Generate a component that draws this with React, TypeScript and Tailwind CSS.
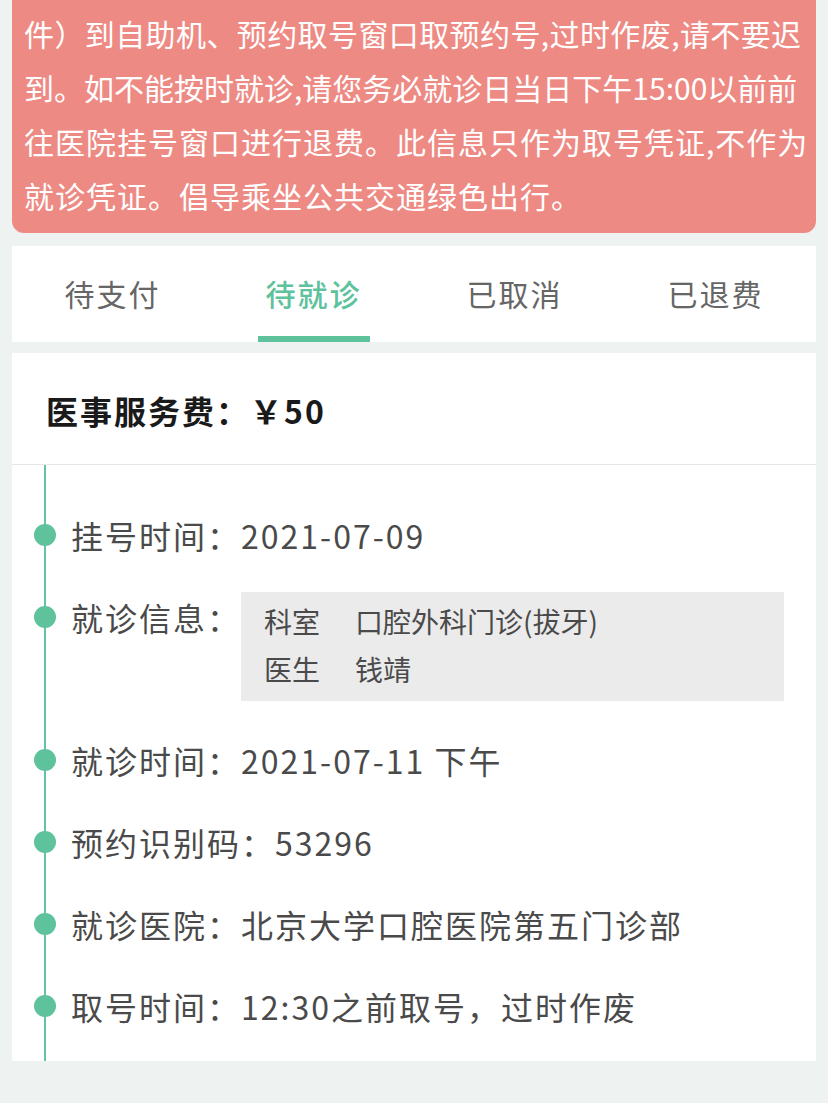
const tabs = ["待支付", "待就诊", "已取消", "已退费"];

const noticeLines = [
  { text: "件）到自助机、预约取号窗口取预约号,过时作废,请不要迟", tracking: "tracking-[0.4px]" },
  { text: "到。如不能按时就诊,请您务必就诊日当日下午15:00以前前", tracking: "tracking-[0px]" },
  { text: "往医院挂号窗口进行退费。此信息只作为取号凭证,不作为", tracking: "tracking-[1px]" },
  { text: "就诊凭证。倡导乘坐公共交通绿色出行。", tracking: "tracking-[1px]" },
];

const font = { fontFamily: '"Noto Sans CJK SC", "Noto Sans", sans-serif' };

function Dot() {
  return (
    <span className="-ml-[12px] mr-[15px] size-[22px] shrink-0 rounded-full bg-[#5ec29d]" />
  );
}

function Row({ label, value }: { label: string; value: string }) {
  return (
    <div className="flex h-[82px] items-center">
      <Dot />
      <span className="whitespace-nowrap text-[32px] leading-[40px] tracking-[2px] text-[#4a4a4a]">
        {label}
        {value}
      </span>
    </div>
  );
}

export default function App() {
  return (
    <div className="min-h-screen bg-[#eef2f1] px-[12px] pb-[42px]" style={font}>
      {/* notice */}
      <section className="rounded-b-[12px] bg-[#ee8a84] pb-[11px] pl-[12px] pt-[6px] text-white">
        {noticeLines.map((line) => (
          <p
            key={line.text}
            className={`whitespace-nowrap text-[30px] leading-[54px] ${line.tracking}`}
          >
            {line.text}
          </p>
        ))}
      </section>

      {/* tabs */}
      <nav className="mt-[13px] grid h-[96px] grid-cols-4 bg-white">
        {tabs.map((tab, i) => {
          const active = i === 1;
          return (
            <div key={tab} className="flex flex-col items-center">
              <span
                className={
                  active
                    ? "pt-[27px] text-[30px] font-medium leading-[40px] tracking-[2px] text-[#5ec29d]"
                    : "pt-[27px] text-[30px] leading-[40px] tracking-[2px] text-[#666666]"
                }
              >
                {tab}
              </span>
              {active && (
                <span className="mt-auto h-[6px] w-[112px] bg-[#5ec29d]" />
              )}
            </div>
          );
        })}
      </nav>

      {/* detail card */}
      <section className="mt-[11px] bg-white">
        <header className="flex h-[112px] items-center border-b border-[#e6e6e6] pl-[34px] pt-[3px]">
          <h2 className="text-[32px] font-bold leading-[40px] tracking-[2px] text-[#1a1a1a]">
            医事服务费：￥50
          </h2>
        </header>

        <div className="ml-[32px] border-l-2 border-[#66c3a1] pb-[14px] pt-[29px]">
          <Row label="挂号时间：" value="2021-07-09" />

          <div className="flex pb-[18px] pt-[16px]">
            <div className="mt-[5px] flex h-[40px] items-center">
              <Dot />
              <span className="whitespace-nowrap text-[32px] leading-[40px] tracking-[2px] text-[#4a4a4a]">
                就诊信息：
              </span>
            </div>
            <div className="mr-[32px] flex-1 bg-[#ebebeb] pb-[8px] pl-[23px] pt-[5px] text-[28px] leading-[48px] text-[#4a4a4a]">
              <div className="flex">
                <span className="w-[91px] shrink-0">科室</span>
                <span>口腔外科门诊(拔牙)</span>
              </div>
              <div className="flex">
                <span className="w-[91px] shrink-0">医生</span>
                <span>钱靖</span>
              </div>
            </div>
          </div>

          <Row label="就诊时间：" value="2021-07-11 下午" />
          <Row label="预约识别码：" value="53296" />
          <Row label="就诊医院：" value="北京大学口腔医院第五门诊部" />
          <Row label="取号时间：" value="12:30之前取号，过时作废" />
        </div>
      </section>
    </div>
  );
}
